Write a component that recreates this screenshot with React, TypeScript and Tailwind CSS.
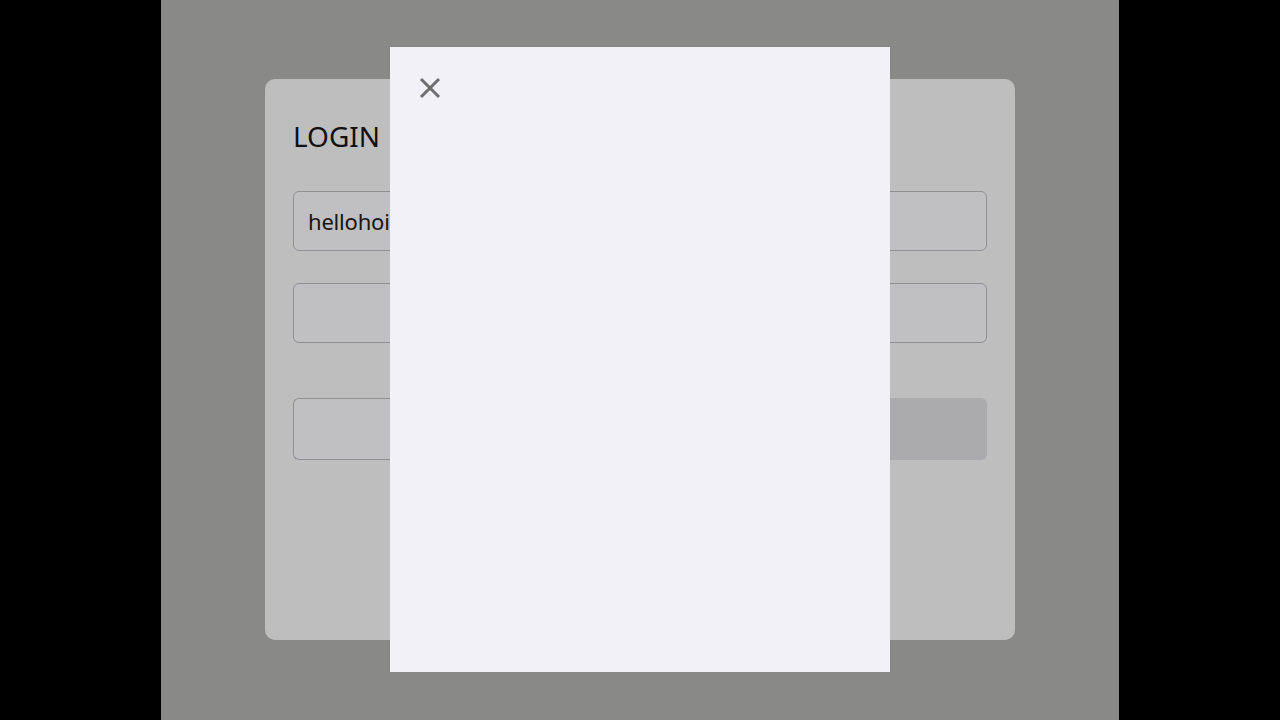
const App = () => {
  return (
    <div className="flex h-[720px] w-[1280px] justify-center bg-black font-['Noto_Sans',sans-serif]">
      <div className="relative h-full w-[958px] bg-[#898987] pl-[104px] pt-[79px]">
        {/* Login card (dimmed behind the dialog) */}
        <div className="flex h-[561px] w-[750px] flex-col rounded-[10px] bg-[#bebebf] px-[28px] pt-[37px]">
          <h1 className="text-[28px] leading-[40px] text-[#111111]">LOGIN</h1>

          <div className="mt-[35px] flex h-[60px] items-center rounded-[6px] border border-[#8f8f91] bg-[#c0c0c2] px-[14px]">
            <span className="text-[22px] tracking-[-0.2px] text-[#151515]">hellohoi</span>
          </div>

          <div className="mt-[32px] h-[60px] rounded-[6px] border border-[#8f8f91] bg-[#c0c0c2]" />

          <div className="mt-[55px] flex h-[62px]">
            <div className="flex-1 rounded-l-[6px] border-y border-l border-[#8f8f91] bg-[#c0c0c2]" />
            <div className="flex-1 rounded-r-[6px] bg-[#ababad]" />
          </div>
        </div>
      </div>

      {/* Dialog */}
      <div className="fixed left-[390px] top-[47px] h-[625px] w-[500px] bg-[#f2f2f6] pl-[29px] pt-[30px]">
        <button className="flex h-[22px] w-[22px] items-center justify-center text-[#6e6e6e]">
          <svg width="22" height="22" viewBox="0 0 22 22" fill="none" stroke="currentColor" strokeWidth="3" strokeLinecap="butt">
            <path d="M2 2 L20 20 M20 2 L2 20" />
          </svg>
        </button>
      </div>
    </div>
  );
};

export default App;
